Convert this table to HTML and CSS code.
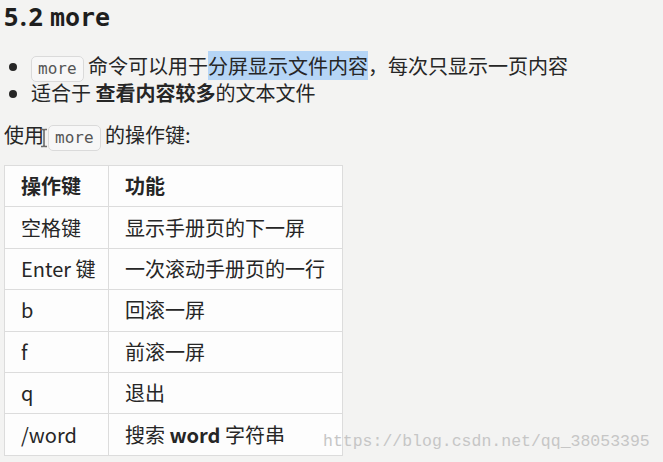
FILE: index.html
```html
<!DOCTYPE html>
<html lang="zh">
<head>
<meta charset="utf-8">
<link rel="stylesheet" href="styles.css">
</head>
<body>
<div class="page">
  <h2 class="title"><span class="num">5.2</span> <span class="mono">more</span></h2>
  <ul class="list">
    <li><code class="code">more</code> 命令可以用于<span class="sel">分屏显示文件内容</span>，每次只显示一页内容</li>
    <li>适合于 <strong>查看内容较多</strong>的文本文件</li>
  </ul>
  <p class="para">使用<span class="caret-wrap"><svg class="caret" width="8" height="20" viewBox="0 0 8 20"><path d="M1 1.5h2.2l0.8 1 0.8-1H7M4 2.5v15M1 18.5h2.2l0.8-1 0.8 1H7" fill="none" stroke="#6a6a6a" stroke-width="1.6"/></svg></span><code class="code">more</code> 的操作键:</p>
  <table class="keys">
    <tr><th>操作键</th><th>功能</th></tr>
    <tr><td>空格键</td><td>显示手册页的下一屏</td></tr>
    <tr><td>Enter 键</td><td>一次滚动手册页的一行</td></tr>
    <tr><td>b</td><td>回滚一屏</td></tr>
    <tr><td>f</td><td>前滚一屏</td></tr>
    <tr><td>q</td><td>退出</td></tr>
    <tr><td>/word</td><td>搜索 <strong>word</strong> 字符串</td></tr>
  </table>
  <div class="watermark">https://blog.csdn.net/qq_38053395</div>
</div>
</body>
</html>
```
FILE: styles.css
```css
html, body {
  margin: 0;
  padding: 0;
  background: #f3f3f2;
}
.page {
  position: relative;
  width: 663px;
  height: 462px;
  overflow: hidden;
  padding: 0 0 0 4px;
  box-sizing: border-box;
  font-family: "Noto Sans CJK SC", sans-serif;
  font-size: 20px;
  color: #262626;
}
.title {
  margin: 0;
  height: 31px;
  line-height: 31px;
  font-size: 25px;
  font-weight: 700;
  color: #1e1e1e;
}
.title .num {
  font-family: "Open Sans", sans-serif;
  letter-spacing: 1.5px;
}
.title .mono {
  font-family: "DejaVu Sans Mono", monospace;
  font-size: 25px;
}
.list {
  margin: 21px 0 0 0;
  padding: 0 0 0 27px;
  line-height: 27px;
}
.list li {
  height: 27px;
}
.code {
  font-family: "DejaVu Sans Mono", monospace;
  font-size: 16px;
  color: #555;
  background: #f7f7f7;
  border: 1px solid #dadada;
  border-radius: 5px;
  padding: 2px 6px 3px;
}
.sel {
  background: #b5d5f6;
}
strong {
  font-weight: 700;
}
.para {
  margin: 15px 0 0 0;
  line-height: 27px;
}
.caret-wrap {
  position: relative;
  display: inline-block;
  width: 4px;
  height: 1px;
}
.caret {
  position: absolute;
  left: -4px;
  top: -14px;
}
.keys {
  margin-top: 14px;
  border-collapse: collapse;
  width: 339px;
  background: #fdfdfd;
}
.keys th, .keys td {
  border: 1px solid #dcdcdc;
  height: 40.4px;
  padding: 0 0 0 16px;
  text-align: left;
  line-height: 20px;
}
.keys th {
  font-weight: 700;
}
.keys th:first-child, .keys td:first-child {
  width: 87px;
}
.watermark {
  position: absolute;
  left: 323px;
  top: 432px;
  font-family: "Liberation Mono", monospace;
  font-size: 16.5px;
  color: #c6c6c6;
}
```
